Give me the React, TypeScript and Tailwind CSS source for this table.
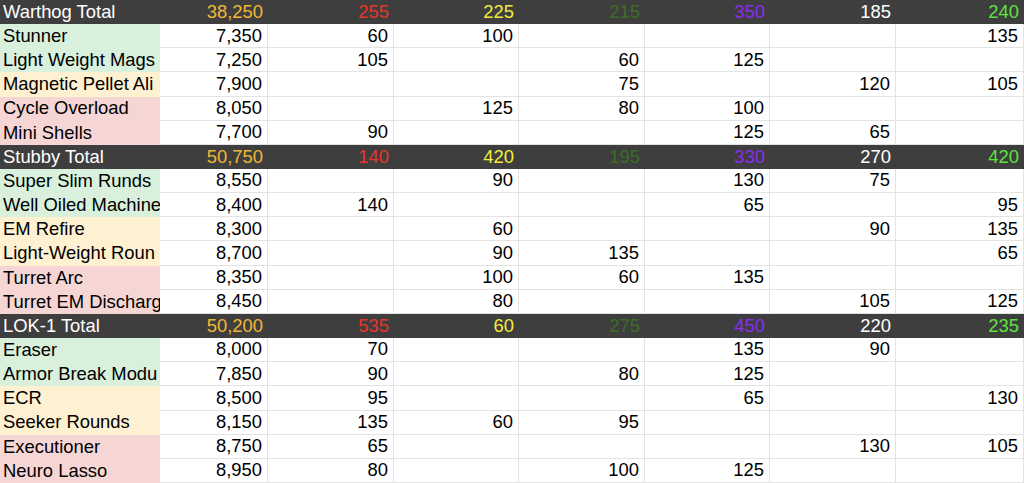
type Tone = 'total' | 'g' | 'y' | 'r'

type Row = { name: string; tone: Tone; cost: string; vals: (string | null)[] }

// names are written as the sheet shows them (the column is too narrow for the rest)
const ROWS: Row[] = [
  { name: 'Warthog Total', tone: 'total', cost: '38,250', vals: ['255', '225', '215', '350', '185', '240'] },
  { name: 'Stunner', tone: 'g', cost: '7,350', vals: ['60', '100', null, null, null, '135'] },
  { name: 'Light Weight Mags', tone: 'g', cost: '7,250', vals: ['105', null, '60', '125', null, null] },
  { name: 'Magnetic Pellet Ali', tone: 'y', cost: '7,900', vals: [null, null, '75', null, '120', '105'] },
  { name: 'Cycle Overload', tone: 'r', cost: '8,050', vals: [null, '125', '80', '100', null, null] },
  { name: 'Mini Shells', tone: 'r', cost: '7,700', vals: ['90', null, null, '125', '65', null] },
  { name: 'Stubby Total', tone: 'total', cost: '50,750', vals: ['140', '420', '195', '330', '270', '420'] },
  { name: 'Super Slim Runds', tone: 'g', cost: '8,550', vals: [null, '90', null, '130', '75', null] },
  { name: 'Well Oiled Machine', tone: 'g', cost: '8,400', vals: ['140', null, null, '65', null, '95'] },
  { name: 'EM Refire', tone: 'y', cost: '8,300', vals: [null, '60', null, null, '90', '135'] },
  { name: 'Light-Weight Roun', tone: 'y', cost: '8,700', vals: [null, '90', '135', null, null, '65'] },
  { name: 'Turret Arc', tone: 'r', cost: '8,350', vals: [null, '100', '60', '135', null, null] },
  { name: 'Turret EM Discharg', tone: 'r', cost: '8,450', vals: [null, '80', null, null, '105', '125'] },
  { name: 'LOK-1 Total', tone: 'total', cost: '50,200', vals: ['535', '60', '275', '450', '220', '235'] },
  { name: 'Eraser', tone: 'g', cost: '8,000', vals: ['70', null, null, '135', '90', null] },
  { name: 'Armor Break Modu', tone: 'g', cost: '7,850', vals: ['90', null, '80', '125', null, null] },
  { name: 'ECR', tone: 'y', cost: '8,500', vals: ['95', null, null, '65', null, '130'] },
  { name: 'Seeker Rounds', tone: 'y', cost: '8,150', vals: ['135', '60', '95', null, null, null] },
  { name: 'Executioner', tone: 'r', cost: '8,750', vals: ['65', null, null, null, '130', '105'] },
  { name: 'Neuro Lasso', tone: 'r', cost: '8,950', vals: ['80', null, '100', '125', null, null] },
]

// colours of the stat totals, left to right
const TOTAL_COLORS = [
  'text-[#e8352b]',
  'text-[#f3ec3c]',
  'text-[#3b6f20]',
  'text-[#8b2cf2]',
  'text-white',
  'text-[#5ce33c]',
]

const NAME_BG: Record<Tone, string> = {
  total: 'bg-[#3e3e3e] text-white',
  g: 'bg-[#d8f0dc] text-black',
  y: 'bg-[#fdf1d1] text-black',
  r: 'bg-[#f6d6d4] text-black',
}

function Cell({ children, total, color }: { children?: React.ReactNode; total: boolean; color?: string }) {
  return (
    <div
      className={
        total
          ? `flex items-center justify-end overflow-hidden whitespace-nowrap bg-[#3e3e3e] pr-[5px] ${color ?? 'text-white'}`
          : 'flex items-center justify-end overflow-hidden whitespace-nowrap border-r border-b border-[#e3e3e3] bg-white pr-[5px] text-black'
      }
    >
      {children}
    </div>
  )
}

export default function App() {
  return (
    <div
      className="grid h-[483px] w-[1024px] grid-cols-[160px_108px_126px_125px_126px_125px_126px_128px] grid-rows-[repeat(20,minmax(0,1fr))] overflow-hidden bg-white text-[18.4px] leading-none"
      style={{ fontFamily: '"Liberation Sans", Arial, sans-serif' }}
    >
      {ROWS.map((row) => {
        const total = row.tone === 'total'
        return (
          <div key={row.name} className="contents">
            <div className={`flex items-center whitespace-nowrap pl-[3px] ${NAME_BG[row.tone]}`}>
              {row.name}
            </div>
            <Cell total={total} color="text-[#f2b636]">
              {row.cost}
            </Cell>
            {row.vals.map((v, i) => (
              <Cell key={i} total={total} color={TOTAL_COLORS[i]}>
                {v}
              </Cell>
            ))}
          </div>
        )
      })}
    </div>
  )
}
